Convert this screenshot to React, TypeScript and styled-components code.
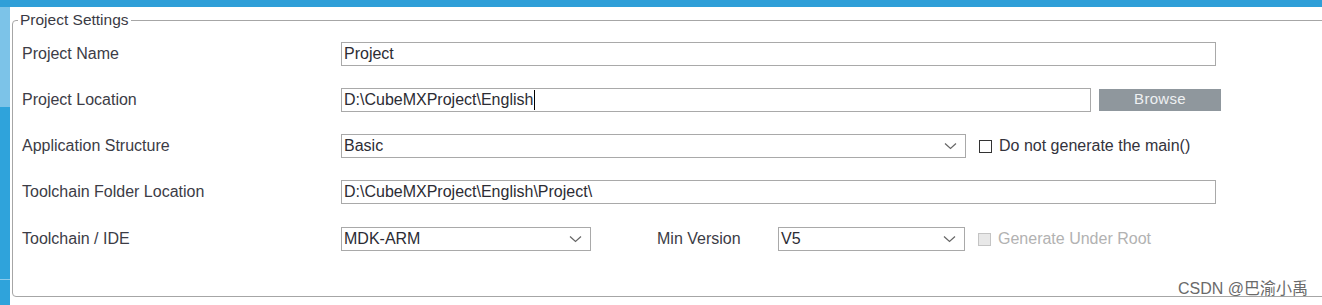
import React, { useState } from 'react';
import styled, { createGlobalStyle } from 'styled-components';

const GlobalStyle = createGlobalStyle`
  html, body {
    margin: 0;
    padding: 0;
    background: #ffffff;
    overflow: hidden;
  }
  body {
    font-family: 'Liberation Sans', Arial, sans-serif;
  }
`;

const Screen = styled.div`
  width: 1322px;
  height: 305px;
  display: flex;
  flex-direction: column;
  position: relative;
  overflow: hidden;
`;

const TopBar = styled.div`
  height: 7px;
  flex: none;
  background: #2f9fd8;
`;

const Body = styled.div`
  flex: 1;
  display: flex;
  gap: 2px;
`;

const SideStrip = styled.div`
  width: 10px;
  flex: none;
  display: flex;
  flex-direction: column;
  .light {
    height: 100px;
    background: #7cc3e8;
  }
  .dark {
    height: 172px;
    background: #2fa3db;
  }
  .line {
    height: 1px;
    background: #8ccbec;
  }
  .rest {
    flex: 1;
    background: #2fa3db;
  }
`;

const Group = styled.fieldset`
  margin: 4px 0 0 0;
  padding: 0 0 46px 0;
  width: 1340px;
  height: 286px;
  box-sizing: border-box;
  border: 1px solid #a6a6a6;
  border-radius: 4px;
  flex: none;

  legend {
    margin-left: 5px;
    padding: 0 2px;
    font-size: 15.5px;
    line-height: 18px;
    color: #3a3a44;
  }
`;

const Rows = styled.div`
  display: flex;
  flex-direction: column;
  gap: 22px;
  padding: 13px 0 0 9px;
`;

const Row = styled.div<{ $shift?: number }>`
  display: flex;
  align-items: center;
  height: 24px;
  margin-top: ${(p) => p.$shift ?? 0}px;
`;

const Label = styled.span<{ $w?: number }>`
  width: ${(p) => p.$w ?? 319}px;
  flex: none;
  font-size: 16px;
  color: #3c3c46;
  white-space: nowrap;
`;

const Field = styled.div<{ $w: number }>`
  width: ${(p) => p.$w}px;
  height: 24px;
  box-sizing: border-box;
  border: 1px solid #a9a9a9;
  background: #fff;
  display: flex;
  align-items: center;
  padding: 0 0 0 2px;
  font-size: 16px;
  color: #2c2c34;
  white-space: nowrap;
  flex: none;
`;

const Caret = styled.span`
  display: inline-block;
  width: 1px;
  height: 20px;
  background: #000;
  margin-left: 1px;
`;

const SelectBox = styled(Field)`
  justify-content: space-between;
  padding-right: 8px;
  svg {
    flex: none;
  }
`;

const BrowseButton = styled.button`
  width: 122px;
  height: 22px;
  margin-left: 8px;
  border: none;
  background: #8f979d;
  color: #eef0f2;
  font-family: 'Liberation Sans', Arial, sans-serif;
  font-size: 15px;
  line-height: 20px;
  letter-spacing: 0.3px;
  padding: 0 0 2px 0;
  flex: none;
`;

const Check = styled.label<{ $disabled?: boolean }>`
  display: flex;
  align-items: center;
  gap: 7px;
  margin-left: 13px;
  font-size: 16px;
  color: ${(p) => (p.$disabled ? '#b2b2b2' : '#33333c')};
  white-space: nowrap;

  .box {
    width: 13px;
    height: 13px;
    box-sizing: border-box;
    border: 1px solid ${(p) => (p.$disabled ? '#c4c4c4' : '#333')};
    background: ${(p) => (p.$disabled ? '#e8e8e8' : '#fff')};
    flex: none;
  }
`;

const Watermark = styled.div`
  position: absolute;
  right: 14px;
  top: 275px;
  font-family: 'Liberation Sans', 'Noto Sans CJK SC', sans-serif;
  font-size: 16px;
  color: #6a6a6a;
  white-space: nowrap;
`;

const Chevron = () => (
  <svg width="13" height="8" viewBox="0 0 13 8">
    <path d="M1 1.5 L6.5 6.5 L12 1.5" fill="none" stroke="#666" strokeWidth="1.2" />
  </svg>
);

const App = () => {
  const [skipMain, setSkipMain] = useState(false);
  return (
    <Screen>
      <GlobalStyle />
      <TopBar />
      <Body>
        <SideStrip>
          <div className="light" />
          <div className="dark" />
          <div className="line" />
          <div className="rest" />
        </SideStrip>
        <Group>
          <legend>Project Settings</legend>
          <Rows>
            <Row>
              <Label>Project Name</Label>
              <Field $w={875}>Project</Field>
            </Row>
            <Row>
              <Label>Project Location</Label>
              <Field $w={750}>
                D:\CubeMXProject\English
                <Caret />
              </Field>
              <BrowseButton>Browse</BrowseButton>
            </Row>
            <Row>
              <Label>Application Structure</Label>
              <SelectBox $w={625}>
                Basic
                <Chevron />
              </SelectBox>
              <Check onClick={() => setSkipMain((v) => !v)}>
                <span className="box" />
                Do not generate the main()
              </Check>
            </Row>
            <Row>
              <Label>Toolchain Folder Location</Label>
              <Field $w={875}>D:\CubeMXProject\English\Project\</Field>
            </Row>
            <Row $shift={1}>
              <Label>Toolchain / IDE</Label>
              <SelectBox $w={250}>
                MDK-ARM
                <Chevron />
              </SelectBox>
              <Label $w={121} style={{ marginLeft: 66 }}>
                Min Version
              </Label>
              <SelectBox $w={187}>
                V5
                <Chevron />
              </SelectBox>
              <Check $disabled>
                <span className="box" />
                Generate Under Root
              </Check>
            </Row>
          </Rows>
        </Group>
      </Body>
      <Watermark>CSDN @巴渝小禹</Watermark>
    </Screen>
  );
};

export default App;
